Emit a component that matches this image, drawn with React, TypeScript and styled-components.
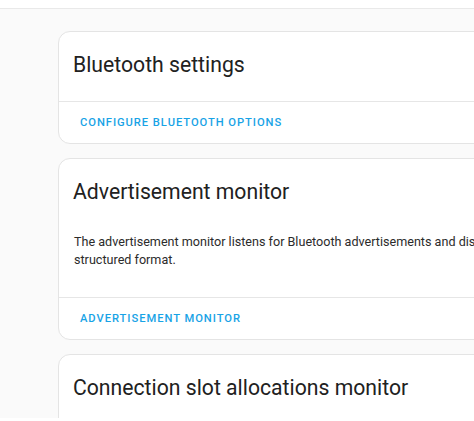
import React from "react";
import styled, { createGlobalStyle } from "styled-components";

const Global = createGlobalStyle`
  html, body { margin: 0; padding: 0; background: #ffffff; overflow: hidden; }
  body { font-family: Roboto, "Noto Sans", Arial, sans-serif; -webkit-font-smoothing: antialiased; }
`;

const Page = styled.div`
  width: 474px;
  height: 421px;
  display: flex;
  flex-direction: column;
  overflow: hidden;
`;

const TopBar = styled.div`
  height: 8px;
  flex: none;
  background: #ffffff;
  border-bottom: 1px solid #e9e9e9;
`;

const Main = styled.div`
  flex: 1;
  background: #fafafa;
  padding: 22px 0 0 58px;
  display: flex;
  flex-direction: column;
  gap: 14px;
  overflow: hidden;
  margin-bottom: 3px;
`;

const Card = styled.section<{ $open?: boolean }>`
  flex: none;
  width: 640px;
  background: #ffffff;
  border: 1px solid #e4e4e4;
  border-radius: 12px;
  display: flex;
  flex-direction: column;
  min-height: ${(p) => (p.$open ? "120px" : "auto")};
`;

const Header = styled.h1`
  margin: 0;
  padding: 18px 14px 22px;
  font-size: 21.2px;
  line-height: 29px;
  font-weight: 400;
  color: #212121;
  white-space: nowrap;
`;

const Content = styled.p`
  margin: 0;
  padding: 5px 15px 28px;
  font-size: 12.6px;
  line-height: 18px;
  color: #2b2b2b;
  width: 540px;
`;

const Actions = styled.div`
  border-top: 1px solid #e6e6e6;
  height: 41px;
  display: flex;
  align-items: center;
  padding: 0 21px;
`;

const ActionButton = styled.button`
  border: none;
  background: transparent;
  padding: 0;
  font-family: Roboto, "Noto Sans", Arial, sans-serif;
  font-size: 11.2px;
  font-weight: 500;
  letter-spacing: 0.95px;
  color: #18a3e6;
  text-transform: uppercase;
  cursor: pointer;
`;

export default function App() {
  return (
    <>
      <Global />
      <Page>
        <TopBar />
        <Main>
          <Card>
            <Header>Bluetooth settings</Header>
            <Actions>
              <ActionButton>Configure Bluetooth options</ActionButton>
            </Actions>
          </Card>
          <Card>
            <Header>Advertisement monitor</Header>
            <Content>
              The advertisement monitor listens for Bluetooth advertisements and displays the data in a
              structured format.
            </Content>
            <Actions>
              <ActionButton>Advertisement monitor</ActionButton>
            </Actions>
          </Card>
          <Card $open>
            <Header>Connection slot allocations monitor</Header>
          </Card>
        </Main>
      </Page>
    </>
  );
}
